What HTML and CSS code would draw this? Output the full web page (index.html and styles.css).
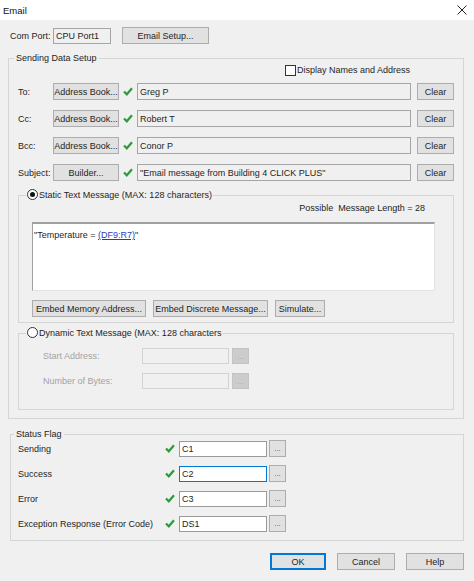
FILE: index.html
```html
<!DOCTYPE html>
<html lang="en">
<head>
  <meta charset="UTF-8">
  <title>Email</title>
  <link rel="stylesheet" href="styles.css">
</head>
<body>

  <div class="titlebar">
    <span class="title">Email</span>
    <svg class="close" width="10" height="10" viewBox="0 0 10 10">
      <path d="M0.5 0.5 L9.5 9.5 M9.5 0.5 L0.5 9.5" stroke="#222" stroke-width="1" fill="none"/>
    </svg>
  </div>

  <div class="dialog">
    <div class="comport">
      <span class="com-label">Com Port:</span>
      <div class="field ro port">CPU Port1</div>
      <div class="btn setup">Email Setup...</div>
    </div>

    <fieldset class="group sending">
      <legend>Sending Data Setup</legend>

      <div class="display-row">
        <span class="checkbox"></span>Display Names and Address
      </div>

      <div class="addr-row">
        <span class="addr-label">To:</span>
        <div class="btn book">Address Book...</div>
        <svg class="tick" width="10" height="9" viewBox="0 0 10 9"><path d="M1 4.5 L3.8 7.3 L9 1.2" stroke="#2f9a3b" stroke-width="2.2" fill="none"/></svg>
        <div class="field ro addr">Greg P</div>
        <div class="btn clear">Clear</div>
      </div>
      <div class="addr-row">
        <span class="addr-label">Cc:</span>
        <div class="btn book">Address Book...</div>
        <svg class="tick" width="10" height="9" viewBox="0 0 10 9"><path d="M1 4.5 L3.8 7.3 L9 1.2" stroke="#2f9a3b" stroke-width="2.2" fill="none"/></svg>
        <div class="field ro addr">Robert T</div>
        <div class="btn clear">Clear</div>
      </div>
      <div class="addr-row">
        <span class="addr-label">Bcc:</span>
        <div class="btn book">Address Book...</div>
        <svg class="tick" width="10" height="9" viewBox="0 0 10 9"><path d="M1 4.5 L3.8 7.3 L9 1.2" stroke="#2f9a3b" stroke-width="2.2" fill="none"/></svg>
        <div class="field ro addr">Conor P</div>
        <div class="btn clear">Clear</div>
      </div>
      <div class="addr-row">
        <span class="addr-label">Subject:</span>
        <div class="btn book">Builder...</div>
        <svg class="tick" width="10" height="9" viewBox="0 0 10 9"><path d="M1 4.5 L3.8 7.3 L9 1.2" stroke="#2f9a3b" stroke-width="2.2" fill="none"/></svg>
        <div class="field ro addr">"Email message from Building 4 CLICK PLUS"</div>
        <div class="btn clear">Clear</div>
      </div>

      <fieldset class="group static">
        <legend><span class="radio checked"></span>Static Text Message (MAX: 128 characters)</legend>
        <div class="msg-length">Possible&nbsp; Message Length = 28</div>
        <div class="textarea">"Temperature = <span class="tag">(DF9:R7)</span>"</div>
        <div class="embed-row">
          <div class="btn embed-mem">Embed Memory Address...</div>
          <div class="btn embed-disc">Embed Discrete Message...</div>
          <div class="btn simulate">Simulate...</div>
        </div>
      </fieldset>

      <fieldset class="group dynamic">
        <legend><span class="radio"></span>Dynamic Text Message (MAX: 128 characters</legend>
        <div class="dyn-row">
          <span class="dyn-label">Start Address:</span>
          <div class="field off"></div>
          <div class="btn dots off">...</div>
        </div>
        <div class="dyn-row">
          <span class="dyn-label">Number of Bytes:</span>
          <div class="field off"></div>
          <div class="btn dots off">...</div>
        </div>
      </fieldset>
    </fieldset>

    <fieldset class="group status">
      <legend>Status Flag</legend>
      <div class="flag-row">
        <span class="flag-label">Sending</span>
        <svg class="tick" width="10" height="9" viewBox="0 0 10 9"><path d="M1 4.5 L3.8 7.3 L9 1.2" stroke="#2f9a3b" stroke-width="2.2" fill="none"/></svg>
        <div class="field flag">C1</div>
        <div class="btn dots">...</div>
      </div>
      <div class="flag-row">
        <span class="flag-label">Success</span>
        <svg class="tick" width="10" height="9" viewBox="0 0 10 9"><path d="M1 4.5 L3.8 7.3 L9 1.2" stroke="#2f9a3b" stroke-width="2.2" fill="none"/></svg>
        <div class="field flag focus">C2</div>
        <div class="btn dots">...</div>
      </div>
      <div class="flag-row">
        <span class="flag-label">Error</span>
        <svg class="tick" width="10" height="9" viewBox="0 0 10 9"><path d="M1 4.5 L3.8 7.3 L9 1.2" stroke="#2f9a3b" stroke-width="2.2" fill="none"/></svg>
        <div class="field flag">C3</div>
        <div class="btn dots">...</div>
      </div>
      <div class="flag-row">
        <span class="flag-label">Exception Response (Error Code)</span>
        <svg class="tick" width="10" height="9" viewBox="0 0 10 9"><path d="M1 4.5 L3.8 7.3 L9 1.2" stroke="#2f9a3b" stroke-width="2.2" fill="none"/></svg>
        <div class="field flag">DS1</div>
        <div class="btn dots">...</div>
      </div>
    </fieldset>

    <div class="actions">
      <div class="btn ok">OK</div>
      <div class="btn">Cancel</div>
      <div class="btn">Help</div>
    </div>
  </div>

</body>
</html>
```

FILE: styles.css
```css
body {
  margin: 0;
  background-color: #f0f0f0;
  font-family: "Liberation Sans", Arial, sans-serif;
  font-size: 9px;
  color: #1e1e1e;
}
.titlebar {
  height: 20px;
  background: #fff;
  display: flex;
  align-items: center;
  justify-content: space-between;
  padding: 0 7px 0 3px;
}
.title {
  font-size: 9.5px;
  color: #111;
}
.dialog {
  padding: 7px 10px 0 8px;
}

/* generic controls */
.btn {
  box-sizing: border-box;
  height: 17px;
  display: flex;
  align-items: center;
  justify-content: center;
  background: #e1e1e1;
  border: 1px solid #adadad;
  white-space: nowrap;
}
.field {
  box-sizing: border-box;
  height: 17px;
  display: flex;
  align-items: center;
  padding-left: 2px;
  background: #fff;
  border: 1px solid #a5a5a5;
  white-space: nowrap;
  overflow: hidden;
}
.field.ro {
  background: #f0f0f0;
}
.tick {
  flex: none;
  margin: 0 4px;
}

/* com port row */
.comport {
  display: flex;
  align-items: center;
  height: 17px;
  margin-left: 2px;
}
.com-label {
  width: 43px;
}
.port {
  width: 58px;
  height: 16px;
}
.setup {
  width: 87px;
  margin-left: 11px;
}

/* group boxes */
.group {
  margin: 0;
  border: 1px solid #d5d5d5;
  min-width: 0;
}
.group legend {
  padding: 0 2px;
  line-height: 12px;
  height: 12px;
  margin-left: -4px;
}
.sending {
  margin-top: 8px;
  padding: 0 9px 8px 9px;
}
.display-row {
  display: flex;
  align-items: center;
  justify-content: flex-end;
  height: 12px;
  padding-right: 44px;
}
.checkbox {
  box-sizing: border-box;
  width: 11px;
  height: 11px;
  border: 1px solid #333;
  background: #fff;
  margin-right: 1px;
}
.addr-row {
  display: flex;
  align-items: center;
  margin-top: 10px;
}
.display-row + .addr-row {
  margin-top: 7px;
}
.addr-label {
  width: 35px;
}
.book {
  width: 66px;
}
.addr {
  flex: 1;
}
.clear {
  width: 37px;
  margin-left: 6px;
}

/* radio legends */
.radio {
  box-sizing: border-box;
  display: inline-block;
  vertical-align: top;
  width: 11px;
  height: 11px;
  border: 1px solid #333;
  border-radius: 50%;
  background: #fff;
  margin-right: 1px;
  position: relative;
}
.radio.checked::after {
  content: "";
  position: absolute;
  left: 2px;
  top: 2px;
  width: 5px;
  height: 5px;
  border-radius: 50%;
  background: #111;
}
.static legend,
.dynamic legend {
  margin-left: -6px;
  padding: 0 1px;
}
.static {
  margin-top: 8px;
  padding: 0 18px 5px 13px;
}
.msg-length {
  text-align: right;
  height: 12px;
  line-height: 12px;
  margin-top: 1px;
  padding-right: 10px;
}
.textarea {
  box-sizing: border-box;
  height: 69px;
  margin-top: 8px;
  background: #fff;
  border-top: 2px solid #a0a0a0;
  border-left: 1px solid #a0a0a0;
  border-right: 1px solid #e3e3e3;
  border-bottom: 1px solid #e3e3e3;
  padding: 6px 1px;
}
.tag {
  color: #1d3fbf;
  text-decoration: underline;
}
.embed-row {
  display: flex;
  gap: 7px;
  margin-top: 9px;
}
.embed-mem {
  width: 114px;
}
.embed-disc {
  width: 115px;
}
.simulate {
  width: 50px;
}

.dynamic {
  margin-top: 4px;
  padding: 0 18px 20px 13px;
}
.dyn-row {
  display: flex;
  align-items: center;
  margin-top: 9px;
  padding-left: 11px;
}
.dyn-label {
  width: 99px;
  color: #a3a3a3;
}
.field.off {
  width: 87px;
  height: 16px;
  background: #f0f0f0;
  border-color: #d3d3d3;
}
.dots {
  width: 17px;
  margin-left: 3px;
  color: #555;
  font-size: 8px;
}
.dots.off {
  height: 16px;
  background: #cccccc;
  border-color: #c4c4c4;
  color: #aaa;
}

/* status flags */
.status {
  margin: 9px 0 0 2px;
  padding: 0 9px 8px 7px;
}
.flag-row {
  display: flex;
  align-items: center;
  margin-top: 8px;
}
.flag-row:first-of-type {
  margin-top: 0;
}
.flag-label {
  width: 147px;
}
.status .tick {
  margin: 0 4px 0 0;
  width: 10px;
}
.flag {
  width: 88px;
  height: 16px;
  border-color: #9a9a9a;
}
.flag.focus {
  border-color: #0078d7;
}
.status .dots {
  margin-left: 2px;
}

.actions {
  display: flex;
  justify-content: flex-end;
  gap: 11px;
  margin-top: 12px;
}
.actions .btn {
  width: 58px;
}
.actions .ok {
  width: 56px;
  border: 1px solid #0078d7;
  box-shadow: inset 0 0 0 1px #0078d7;
}
```
